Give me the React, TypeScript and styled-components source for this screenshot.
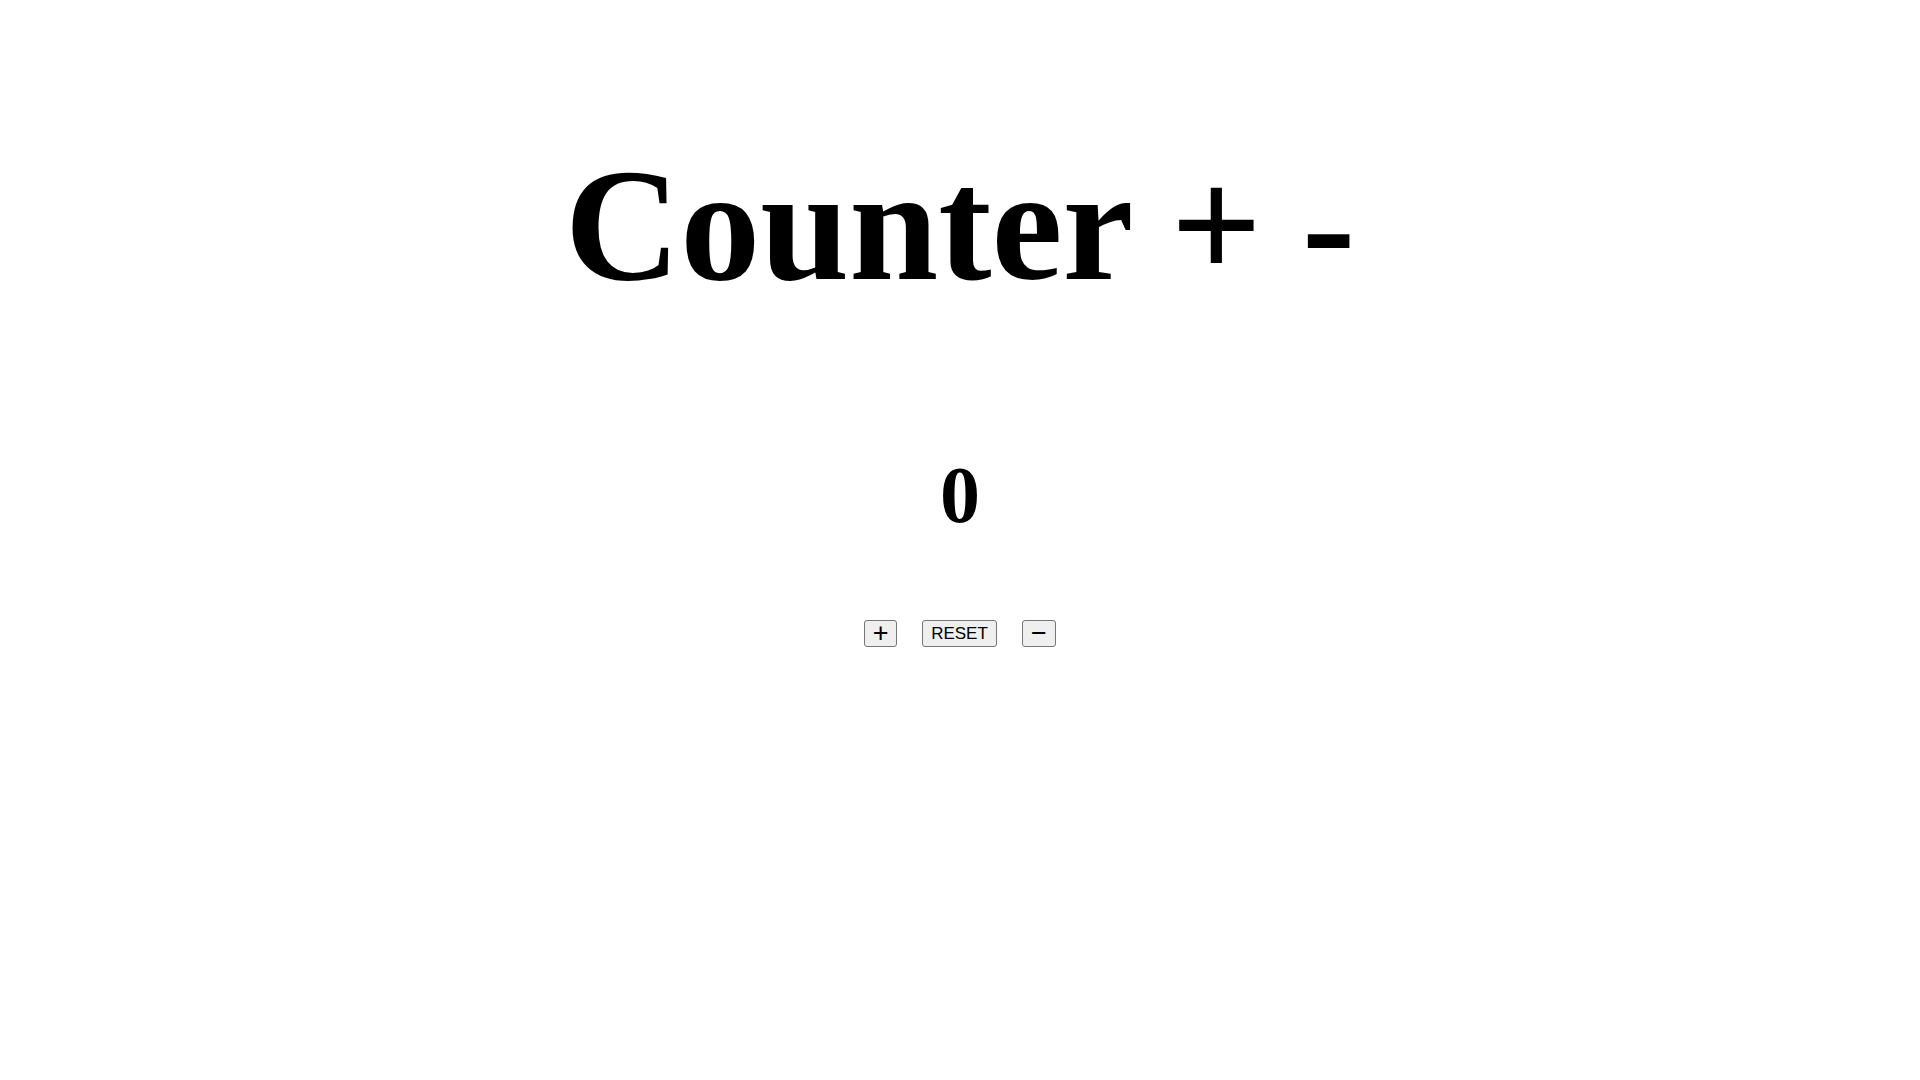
import styled, { createGlobalStyle } from "styled-components";
import { useState } from "react";

const GlobalStyle = createGlobalStyle`
  html, body {
    margin: 0;
    padding: 0;
    background: #ffffff;
  }
`;

const Page = styled.main`
  display: flex;
  flex-direction: column;
  align-items: center;
  padding-top: 145px;
  font-family: "Liberation Serif", "Times New Roman", serif;
  color: #000;
`;

const Title = styled.h1`
  margin: 0;
  height: 160px;
  font-size: 160px;
  font-weight: 700;
  line-height: 1;
  white-space: nowrap;
`;

const Count = styled.h2`
  margin: 150px 0 0;
  height: 80px;
  font-size: 80px;
  font-weight: 700;
  line-height: 1;
`;

const Controls = styled.div`
  display: flex;
  align-items: center;
  gap: 25px;
  margin-top: 85px;
`;

const Button = styled.button<{ $symbol?: boolean; $w?: number }>`
  display: flex;
  align-items: center;
  justify-content: center;
  box-sizing: border-box;
  height: 27px;
  width: ${({ $w }) => ($w ? `${$w}px` : "auto")};
  padding: ${({ $symbol }) => ($symbol ? "0" : "0 8px")};
  border: 1px solid rgb(118, 118, 118);
  border-radius: 3px;
  background: rgb(239, 239, 239);
  color: #000;
  font-family: "Liberation Sans", Arial, sans-serif;
  font-size: ${({ $symbol }) => ($symbol ? "27px" : "17px")};
  line-height: 1;
  cursor: pointer;
`;

const App = () => {
  const [count, setCount] = useState(0);

  return (
    <>
      <GlobalStyle />
      <Page>
        <Title>Counter + -</Title>
        <Count>{count}</Count>
        <Controls>
          <Button $symbol $w={33} onClick={() => setCount(count + 1)}>
            +
          </Button>
          <Button onClick={() => setCount(0)}>RESET</Button>
          <Button $symbol $w={34} onClick={() => setCount(count - 1)}>
            −
          </Button>
        </Controls>
      </Page>
    </>
  );
};

export default App;
